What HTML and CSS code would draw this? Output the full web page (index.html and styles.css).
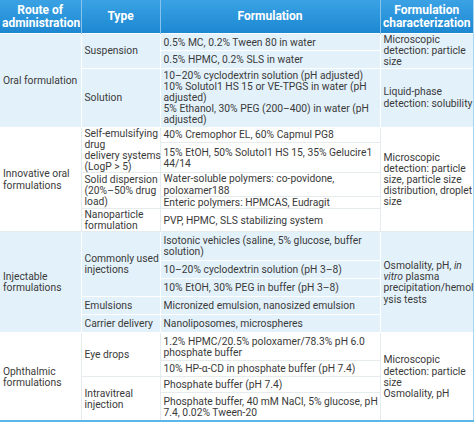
FILE: index.html
```html
<!DOCTYPE html>
<html lang="en">
<head>
	<meta charset="UTF-8">
	<title>Formulation table</title>
	<link rel="stylesheet" href="styles.css">
</head>
<body>
	<table class="tbl">
		<colgroup>
			<col class="c1"><col class="c2"><col class="c3"><col class="c4">
		</colgroup>
		<thead>
			<tr>
				<th>Route of<br>administration</th>
				<th>Type</th>
				<th>Formulation</th>
				<th>Formulation<br>characterization</th>
			</tr>
		</thead>
		<!-- oral -->
		<tbody class="blue">
			<tr>
				<td rowspan="3">Oral formulation</td>
				<td rowspan="2">Suspension</td>
				<td>0.5% MC, 0.2% Tween 80 in water</td>
				<td rowspan="2">Microscopic<br>detection: particle<br>size</td>
			</tr>
			<tr>
				<td>0.5% HPMC, 0.2% SLS in water</td>
			</tr>
			<tr>
				<td>Solution</td>
				<td class="pad">10–20% cyclodextrin solution (pH adjusted)<br>10% Solutol1 HS 15 or VE-TPGS in water (pH<br>adjusted)<br>5% Ethanol, 30% PEG (200–400) in water (pH<br>adjusted)</td>
				<td>Liquid-phase<br>detection: solubility</td>
			</tr>
		</tbody>
		<!-- innovative oral -->
		<tbody class="white">
			<tr>
				<td rowspan="5">Innovative oral<br>formulations</td>
				<td rowspan="2">Self-emulsifying<br>drug<br>delivery systems<br>(LogP &gt; 5)</td>
				<td>40% Cremophor EL, 60% Capmul PG8</td>
				<td rowspan="5">Microscopic<br>detection: particle<br>size, particle size<br>distribution, droplet<br>size</td>
			</tr>
			<tr>
				<td>15% EtOH, 50% Solutol1 HS 15, 35% Gelucire1<br>44/14</td>
			</tr>
			<tr>
				<td rowspan="2">Solid dispersion<br>(20%–50% drug<br>load)</td>
				<td>Water-soluble polymers: co-povidone,<br>poloxamer188</td>
			</tr>
			<tr>
				<td>Enteric polymers: HPMCAS, Eudragit</td>
			</tr>
			<tr>
				<td>Nanoparticle<br>formulation</td>
				<td>PVP, HPMC, SLS stabilizing system</td>
			</tr>
		</tbody>
		<!-- injectable -->
		<tbody class="blue">
			<tr class="h29">
				<td rowspan="5">Injectable<br>formulations</td>
				<td rowspan="3">Commonly used<br>injections</td>
				<td>Isotonic vehicles (saline, 5% glucose, buffer<br>solution)</td>
				<td rowspan="5">Osmolality, pH, <i>in</i><br><i>vitro</i> plasma<br>precipitation/hemol<br>ysis tests</td>
			</tr>
			<tr class="h18">
				<td>10–20% cyclodextrin solution (pH 3–8)</td>
			</tr>
			<tr class="h18">
				<td>10% EtOH, 30% PEG in buffer (pH 3–8)</td>
			</tr>
			<tr class="h18">
				<td>Emulsions</td>
				<td>Micronized emulsion, nanosized emulsion</td>
			</tr>
			<tr class="h18">
				<td>Carrier delivery</td>
				<td>Nanoliposomes, microspheres</td>
			</tr>
		</tbody>
		<!-- ophthalmic -->
		<tbody class="white">
			<tr class="h28">
				<td rowspan="4">Ophthalmic<br>formulations</td>
				<td rowspan="2">Eye drops</td>
				<td>1.2% HPMC/20.5% poloxamer/78.3% pH 6.0<br>phosphate buffer</td>
				<td rowspan="4">Microscopic<br>detection: particle<br>size<br>Osmolality, pH</td>
			</tr>
			<tr class="h16">
				<td>10% HP-α-CD in phosphate buffer (pH 7.4)</td>
			</tr>
			<tr class="h16">
				<td rowspan="2">Intravitreal<br>injection</td>
				<td>Phosphate buffer (pH 7.4)</td>
			</tr>
			<tr class="h28">
				<td>Phosphate buffer, 40 mM NaCl, 5% glucose, pH<br>7.4, 0.02% Tween-20</td>
			</tr>
		</tbody>
	</table>
</body>
</html>
```

FILE: styles.css
```css
*{margin: 0;padding: 0;}
body {
	background: #fff;
	font-family: Roboto, "Liberation Sans", sans-serif;
	color: #3a3a3a;
}
.tbl {
	width: 474px;
	table-layout: fixed;
	border-collapse: collapse;
	border-right: 2px solid #a9d7f2;
	border-bottom: 2px solid #5ab7ea;
	font-size: 10.3px;
	line-height: 11.2px;
}
.c1 { width: 81px; }
.c2 { width: 79px; }
.c3 { width: 220px; }
.c4 { width: 94px; }

.tbl th {
	height: 33px;
	background: linear-gradient(#3aa2e4, #1d88d2);
	color: #fff;
	font-size: 12px;
	line-height: 13px;
	font-weight: bold;
	text-align: center;
	vertical-align: middle;
	border-left: 1px solid #86c4ee;
	padding: 0 2px;
}
.tbl th:first-child { border-left: none; }

.tbl td {
	padding: 0 3px;
	vertical-align: middle;
	white-space: nowrap;
	border: 1px solid #e6ebee;
}
.tbl td:first-child { border-left: none; }
.tbl td.pad { padding: 1px 3px; }

.blue td {
	background: #e3f1fa;
	border-color: #fff;
}
.white td {
	background: #fff;
}

.h16 { height: 16px; }
.h18 { height: 18px; }
.h28 { height: 28px; }
.h29 { height: 29px; }
```
